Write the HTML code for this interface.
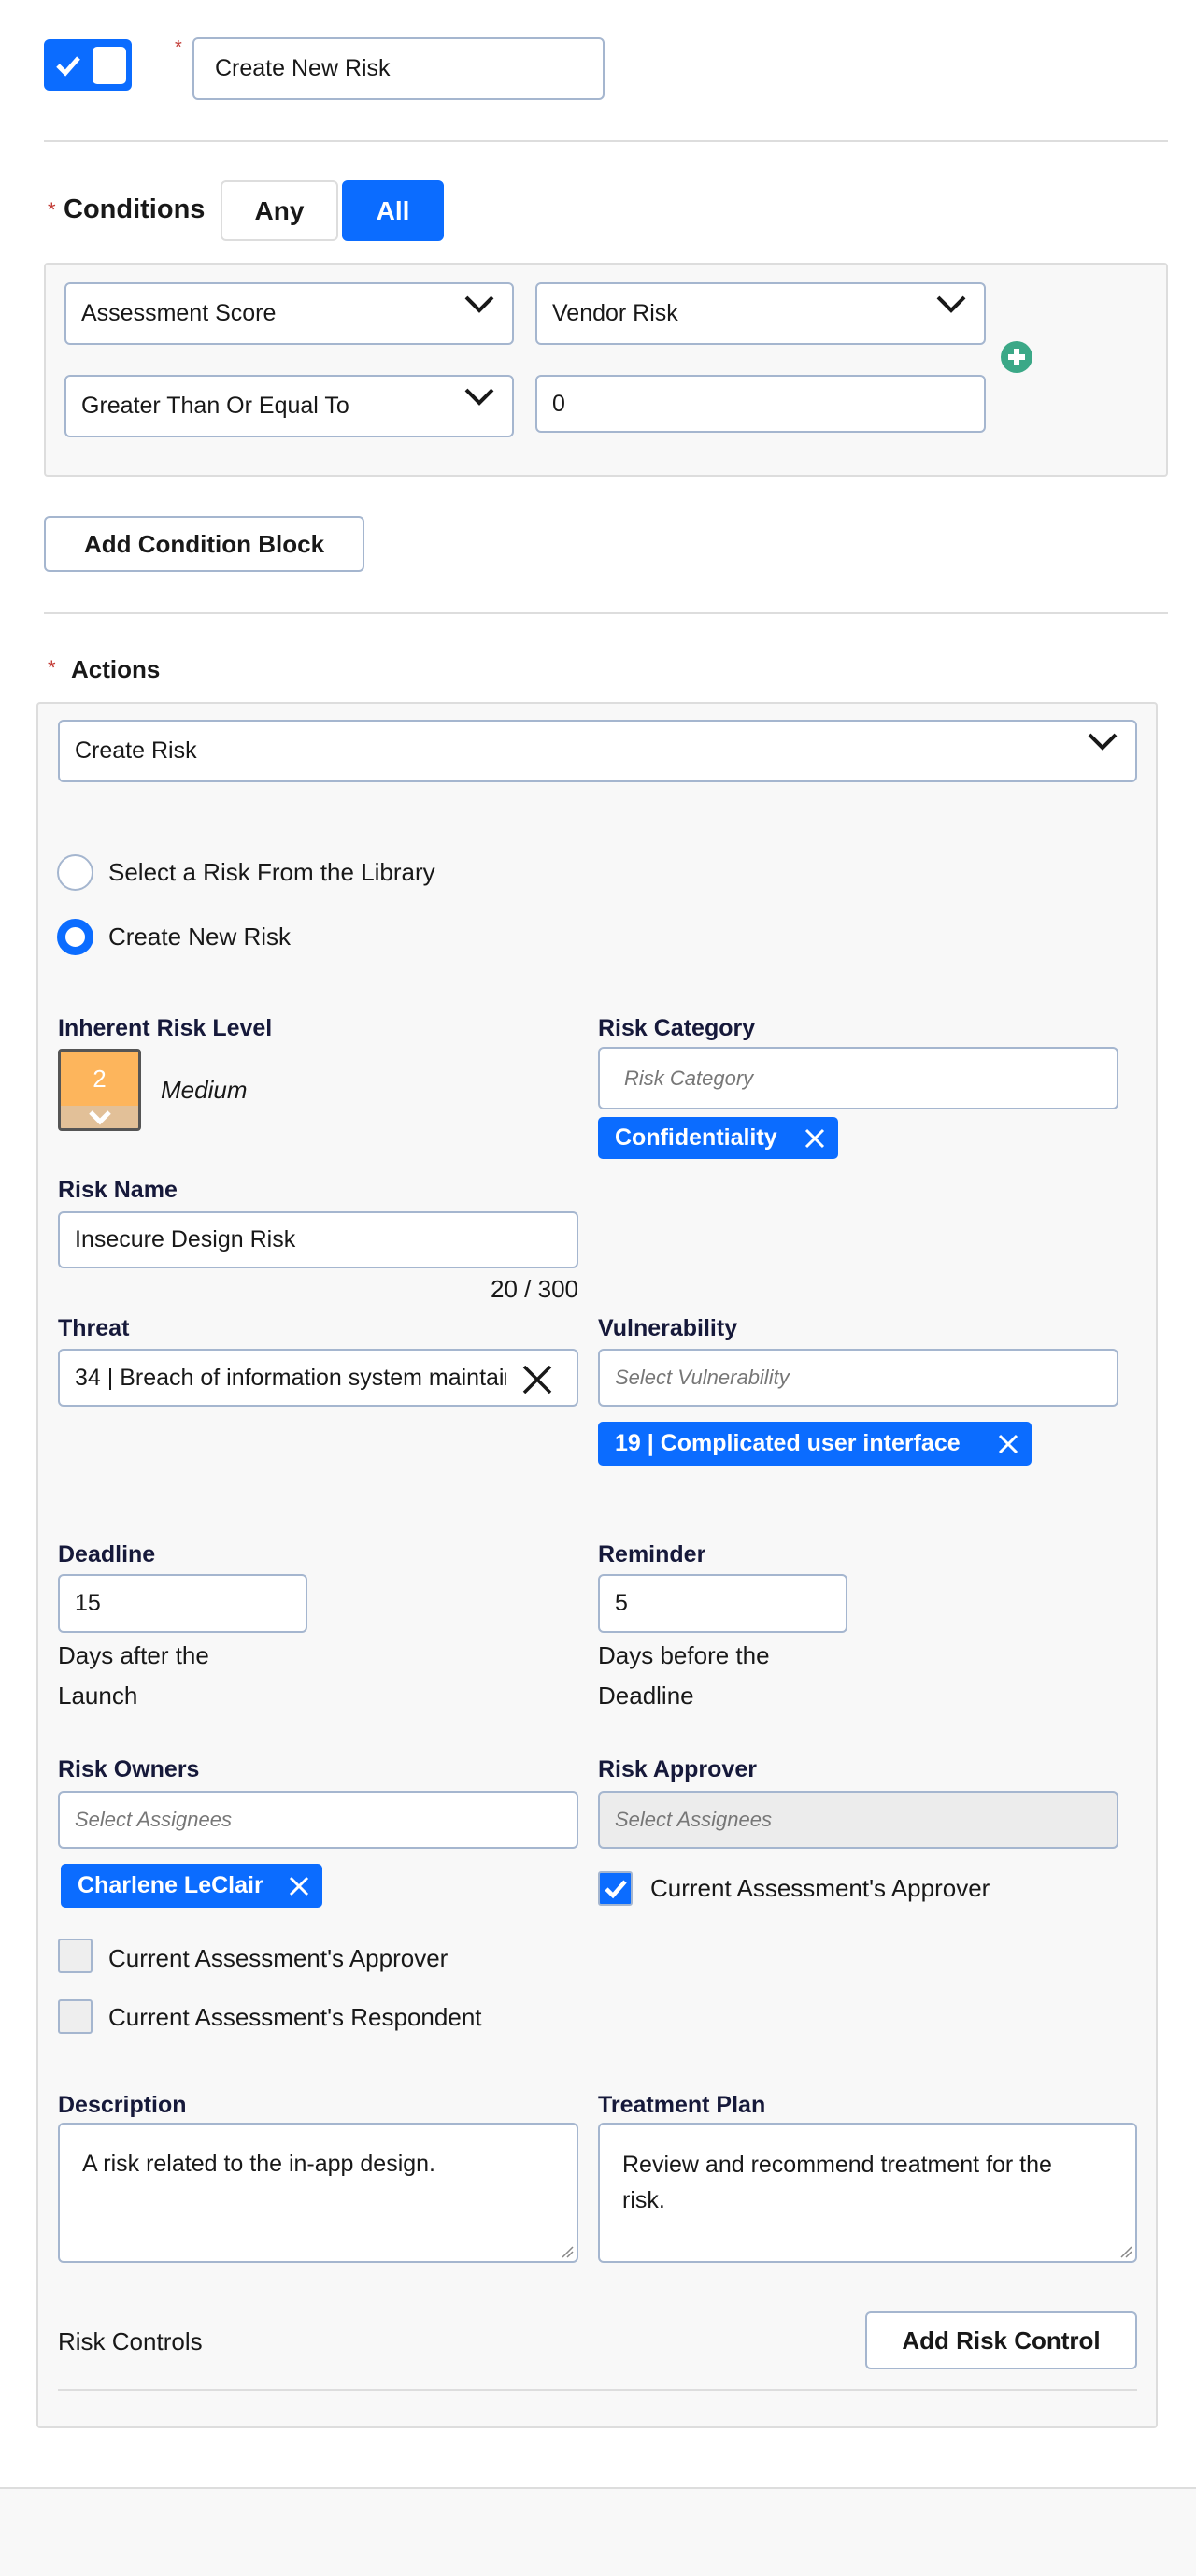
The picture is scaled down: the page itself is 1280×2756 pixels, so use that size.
<!DOCTYPE html>
<html><head><meta charset="utf-8"><style>
*{box-sizing:border-box;margin:0;padding:0}
body{width:1280px;height:2756px;background:#fff;font-family:"Liberation Sans",sans-serif;color:#181818;position:relative;overflow:hidden}
.a{position:absolute}
.inp{position:absolute;background:#fff;border:2px solid #a5b6cf;border-radius:6px;font-size:25px;display:flex;align-items:center;padding-left:22px;color:#181818}
.ph{font-style:italic;color:#777;font-size:22px}
.lbl{position:absolute;font-weight:bold;font-size:25px;color:#16193a}
.hr{position:absolute;height:2px;background:#ddd}
.pill{position:absolute;background:#0b6cff;color:#fff;font-weight:bold;font-size:25px;border-radius:5px;display:flex;align-items:center;padding-left:18px}
.pill svg{position:absolute;right:14px;top:50%;margin-top:-11px}
.btn{position:absolute;background:#fff;border:2px solid #a5b6cf;border-radius:6px;font-weight:bold;font-size:26px;display:flex;align-items:center;justify-content:center;color:#181818}
.chev{position:absolute;right:18px;top:10px}
.cb{position:absolute;width:37px;height:37px;border:2px solid #a5b6cf;border-radius:3px;background:#eee}
.txt{position:absolute;font-size:26px;color:#181818}
.grip{position:absolute;right:3px;bottom:3px}
</style></head><body>
<div class="a" style="left:47px;top:42px;width:94px;height:55px;background:#0b6cff;border-radius:6px"></div>
<div class="a" style="left:99px;top:50px;width:36px;height:40px;background:#fff;border-radius:5px"></div>
<svg class="a" style="left:58px;top:56px" width="30" height="28" viewBox="0 0 30 28"><path d="M4 14 L12 22 L26 6" stroke="#fff" stroke-width="5" fill="none"/></svg>
<div class="a" style="left:187px;top:40px;color:#c23934;font-size:20px">*</div>
<div class="inp" style="left:206px;top:40px;width:441px;height:67px">Create New Risk</div>
<div class="hr" style="left:47px;top:150px;width:1203px"></div>

<div class="a" style="left:51px;top:212px;color:#c23934;font-size:22px">*</div>
<div class="a" style="left:68px;top:208px;font-size:29px;font-weight:bold">Conditions</div>
<div class="btn" style="left:236px;top:193px;width:126px;height:65px;font-size:28px;border-color:#ddd">Any</div>
<div class="btn" style="left:366px;top:193px;width:109px;height:65px;font-size:28px;background:#0b6cff;color:#fff;border-color:#0b6cff">All</div>

<div class="a" style="left:47px;top:281px;width:1203px;height:229px;background:#f8f8f8;border:2px solid #ddd;border-radius:4px"></div>
<div class="inp" style="left:69px;top:302px;width:481px;height:67px;padding-left:16px">Assessment Score<svg class="chev" width="34" height="24" viewBox="0 0 34 24"><path d="M3 4 L17 18 L31 4" stroke="#181818" stroke-width="4" fill="none"/></svg></div>
<div class="inp" style="left:573px;top:302px;width:482px;height:67px;padding-left:16px">Vendor Risk<svg class="chev" width="34" height="24" viewBox="0 0 34 24"><path d="M3 4 L17 18 L31 4" stroke="#181818" stroke-width="4" fill="none"/></svg></div>
<div class="inp" style="left:69px;top:401px;width:481px;height:67px;padding-left:16px">Greater Than Or Equal To<svg class="chev" width="34" height="24" viewBox="0 0 34 24"><path d="M3 4 L17 18 L31 4" stroke="#181818" stroke-width="4" fill="none"/></svg></div>
<div class="inp" style="left:573px;top:401px;width:482px;height:62px;padding-left:16px">0</div>
<svg class="a" style="left:1071px;top:365px" width="34" height="34" viewBox="0 0 34 34"><circle cx="17" cy="17" r="17" fill="#3ba887"/><path d="M17 8 V26 M8 17 H26" stroke="#fff" stroke-width="6"/></svg>

<div class="btn" style="left:47px;top:552px;width:343px;height:60px">Add Condition Block</div>
<div class="hr" style="left:47px;top:655px;width:1203px"></div>

<div class="a" style="left:51px;top:702px;color:#c23934;font-size:22px">*</div>
<div class="a" style="left:76px;top:701px;font-size:26px;font-weight:bold">Actions</div>

<div class="a" style="left:39px;top:751px;width:1200px;height:1847px;background:#f8f8f8;border:2px solid #ddd;border-radius:4px"></div>
<div class="inp" style="left:62px;top:770px;width:1155px;height:67px;padding-left:16px">Create Risk<svg class="chev" width="34" height="24" viewBox="0 0 34 24"><path d="M3 4 L17 18 L31 4" stroke="#181818" stroke-width="4" fill="none"/></svg></div>

<div class="a" style="left:61px;top:914px;width:39px;height:39px;border:2px solid #a5b6cf;border-radius:50%;background:#fff"></div>
<div class="txt" style="left:116px;top:918px">Select a Risk From the Library</div>
<div class="a" style="left:61px;top:983px;width:39px;height:39px;border:9px solid #0b6cff;border-radius:50%;background:#fff"></div>
<div class="txt" style="left:116px;top:987px">Create New Risk</div>

<div class="lbl" style="left:62px;top:1086px">Inherent Risk Level</div>
<div class="a" style="left:62px;top:1122px;width:89px;height:88px;border:3px solid #555;border-radius:4px;background:#fdb55c;overflow:hidden">
<div class="a" style="left:0;top:0;width:83px;height:58px;color:#fff;font-size:26px;text-align:center;line-height:58px">2</div>
<div class="a" style="left:0;top:58px;width:83px;height:27px;background:#e2c098"></div>
<svg class="a" style="left:28px;top:60px" width="28" height="22" viewBox="0 0 28 22"><path d="M4 5 L14 15 L24 5" stroke="#fff" stroke-width="5" fill="none"/></svg></div>
<div class="a" style="left:172px;top:1151px;font-size:26px;font-style:italic">Medium</div>

<div class="lbl" style="left:640px;top:1086px">Risk Category</div>
<div class="inp" style="left:640px;top:1120px;width:557px;height:67px;padding-left:26px"><span class="ph">Risk Category</span></div>
<div class="pill" style="left:640px;top:1195px;width:257px;height:45px">Confidentiality<svg width="22" height="22" viewBox="0 0 22 22"><path d="M2 2 L20 20 M20 2 L2 20" stroke="#fff" stroke-width="3"/></svg></div>

<div class="lbl" style="left:62px;top:1259px">Risk Name</div>
<div class="inp" style="left:62px;top:1296px;width:557px;height:61px;padding-left:16px">Insecure Design Risk</div>
<div class="a" style="left:400px;top:1364px;width:219px;text-align:right;font-size:26px">20 / 300</div>

<div class="lbl" style="left:62px;top:1407px">Threat</div>
<div class="inp" style="left:62px;top:1443px;width:557px;height:62px;padding-left:16px"><span style="white-space:nowrap;overflow:hidden;width:462px;display:block">34 | Breach of information system maintainability</span><svg class="a" style="right:26px;top:16px" width="32" height="30" viewBox="0 0 32 30"><path d="M2 1 L30 29 M30 1 L2 29" stroke="#181818" stroke-width="3.5"/></svg></div>
<div class="lbl" style="left:640px;top:1407px">Vulnerability</div>
<div class="inp" style="left:640px;top:1443px;width:557px;height:62px;padding-left:16px"><span class="ph">Select Vulnerability</span></div>
<div class="pill" style="left:640px;top:1521px;width:464px;height:47px">19 | Complicated user interface<svg width="22" height="22" viewBox="0 0 22 22"><path d="M2 2 L20 20 M20 2 L2 20" stroke="#fff" stroke-width="3"/></svg></div>

<div class="lbl" style="left:62px;top:1649px">Deadline</div>
<div class="inp" style="left:62px;top:1684px;width:267px;height:63px;padding-left:16px">15</div>
<div class="txt" style="left:62px;top:1750px;line-height:43px">Days after the<br>Launch</div>
<div class="lbl" style="left:640px;top:1649px">Reminder</div>
<div class="inp" style="left:640px;top:1684px;width:267px;height:63px;padding-left:16px">5</div>
<div class="txt" style="left:640px;top:1750px;line-height:43px">Days before the<br>Deadline</div>

<div class="lbl" style="left:62px;top:1879px">Risk Owners</div>
<div class="inp" style="left:62px;top:1916px;width:557px;height:62px;padding-left:16px"><span class="ph">Select Assignees</span></div>
<div class="lbl" style="left:640px;top:1879px">Risk Approver</div>
<div class="inp" style="left:640px;top:1916px;width:557px;height:62px;padding-left:16px;background:#ececec"><span class="ph">Select Assignees</span></div>
<div class="pill" style="left:65px;top:1994px;width:280px;height:47px">Charlene LeClair<svg width="22" height="22" viewBox="0 0 22 22"><path d="M2 2 L20 20 M20 2 L2 20" stroke="#fff" stroke-width="3"/></svg></div>
<div class="cb" style="left:640px;top:2002px;background:#0b6cff;border-color:#a5b6cf"></div>
<svg class="a" style="left:646px;top:2010px" width="26" height="22" viewBox="0 0 26 22"><path d="M3 11 L10 18 L23 3" stroke="#fff" stroke-width="4.5" fill="none"/></svg>
<div class="txt" style="left:696px;top:2005px">Current Assessment's Approver</div>
<div class="cb" style="left:62px;top:2074px"></div>
<div class="txt" style="left:116px;top:2080px">Current Assessment's Approver</div>
<div class="cb" style="left:62px;top:2139px"></div>
<div class="txt" style="left:116px;top:2143px">Current Assessment's Respondent</div>

<div class="lbl" style="left:62px;top:2238px">Description</div>
<div class="inp" style="left:62px;top:2271px;width:557px;height:150px;align-items:flex-start;padding:28px 24px;font-size:25px">A risk related to the in-app design.<svg class="grip" width="14" height="14" viewBox="0 0 14 14"><path d="M2 13 L13 2 M7 13 L13 7" stroke="#888" stroke-width="1.5"/></svg></div>
<div class="lbl" style="left:640px;top:2238px">Treatment Plan</div>
<div class="inp" style="left:640px;top:2271px;width:577px;height:150px;align-items:flex-start;padding:24px 60px 24px 24px;font-size:25px;line-height:38px">Review and recommend treatment for the risk.<svg class="grip" width="14" height="14" viewBox="0 0 14 14"><path d="M2 13 L13 2 M7 13 L13 7" stroke="#888" stroke-width="1.5"/></svg></div>

<div class="txt" style="left:62px;top:2490px">Risk Controls</div>
<div class="btn" style="left:926px;top:2473px;width:291px;height:62px">Add Risk Control</div>
<div class="hr" style="left:62px;top:2556px;width:1155px"></div>

<div class="a" style="left:0;top:2661px;width:1280px;height:95px;background:#f8f8f8;border-top:2px solid #ddd"></div>
</body></html>
